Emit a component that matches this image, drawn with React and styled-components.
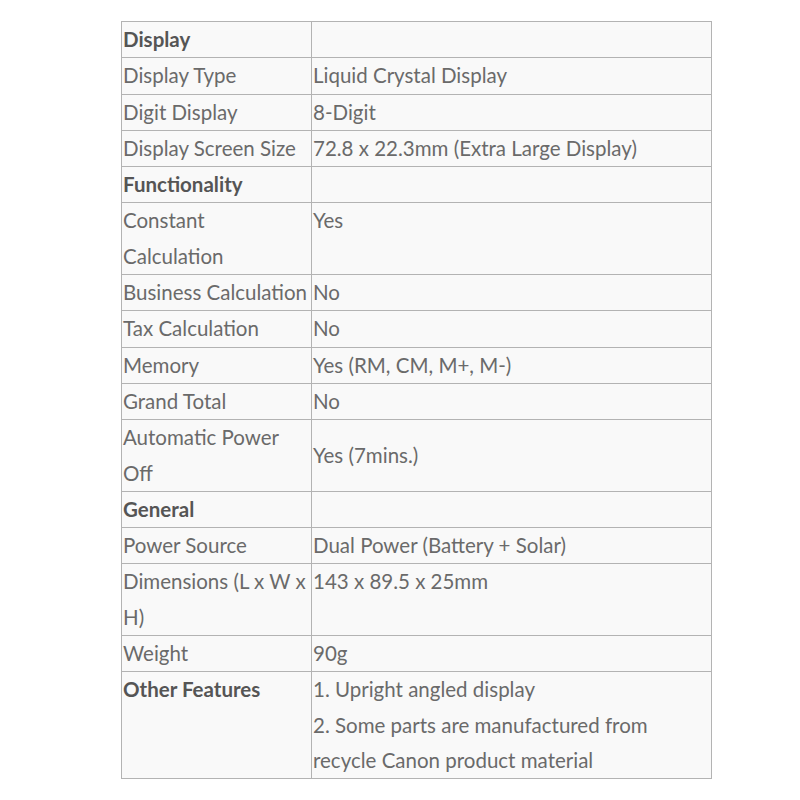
import React from 'react'
import styled, { createGlobalStyle } from 'styled-components'

const GlobalStyle = createGlobalStyle`
    body {
        margin: 0;
        background: #ffffff;
        font-family: Lato, "Liberation Sans", sans-serif;
    }
`

const specs = [
    { head: true, label: "Display", value: "" },
    { label: "Display Type", value: "Liquid Crystal Display" },
    { label: "Digit Display", value: "8-Digit" },
    { label: "Display Screen Size", value: "72.8 x 22.3mm (Extra Large Display)" },
    { head: true, label: "Functionality", value: "" },
    { label: "Constant Calculation", value: "Yes", top: true },
    { label: "Business Calculation", value: "No" },
    { label: "Tax Calculation", value: "No" },
    { label: "Memory", value: "Yes (RM, CM, M+, M-)" },
    { label: "Grand Total", value: "No" },
    { label: "Automatic Power Off", value: "Yes (7mins.)" },
    { head: true, label: "General", value: "" },
    { label: "Power Source", value: "Dual Power (Battery + Solar)" },
    { label: "Dimensions (L x W x H)", value: "143 x 89.5 x 25mm", top: true },
    { label: "Weight", value: "90g" },
    { head: true, label: "Other Features", value: ["1. Upright angled display", "2. Some parts are manufactured from recycle Canon product material"], top: true },
]

const App = () => {
    return (
        <Page>
            <GlobalStyle />
            <SpecTable>
                <colgroup>
                    <col style={{ width: 190 }} />
                    <col />
                </colgroup>
                <tbody>
                    {specs.map(row => (
                        <tr key={row.label}>
                            <Cell $head={row.head} $top={row.top}>{row.label}</Cell>
                            <Cell $top={row.top}>
                                {Array.isArray(row.value)
                                    ? row.value.map(v => <Line key={v}>{v}</Line>)
                                    : row.value}
                            </Cell>
                        </tr>
                    ))}
                </tbody>
            </SpecTable>
        </Page>
    )
}

export default App

const Page = styled.div`
    padding: 21px 0 0 121px;
`

const SpecTable = styled.table`
    width: 591px;
    border-collapse: collapse;
    table-layout: fixed;
    background: #f9f9f9;
    border: 1px solid #a9a9a9;
`

const Cell = styled.td`
    border: 1px solid #b3b3b3;
    padding: 0 3px 0 1px;
    font-size: 20.5px;
    line-height: 35.3px;
    color: ${p => p.$head ? '#555555' : '#6a6a6a'};
    font-weight: ${p => p.$head ? 700 : 400};
    vertical-align: ${p => p.$top ? 'top' : 'middle'};
`

const Line = styled.div``
